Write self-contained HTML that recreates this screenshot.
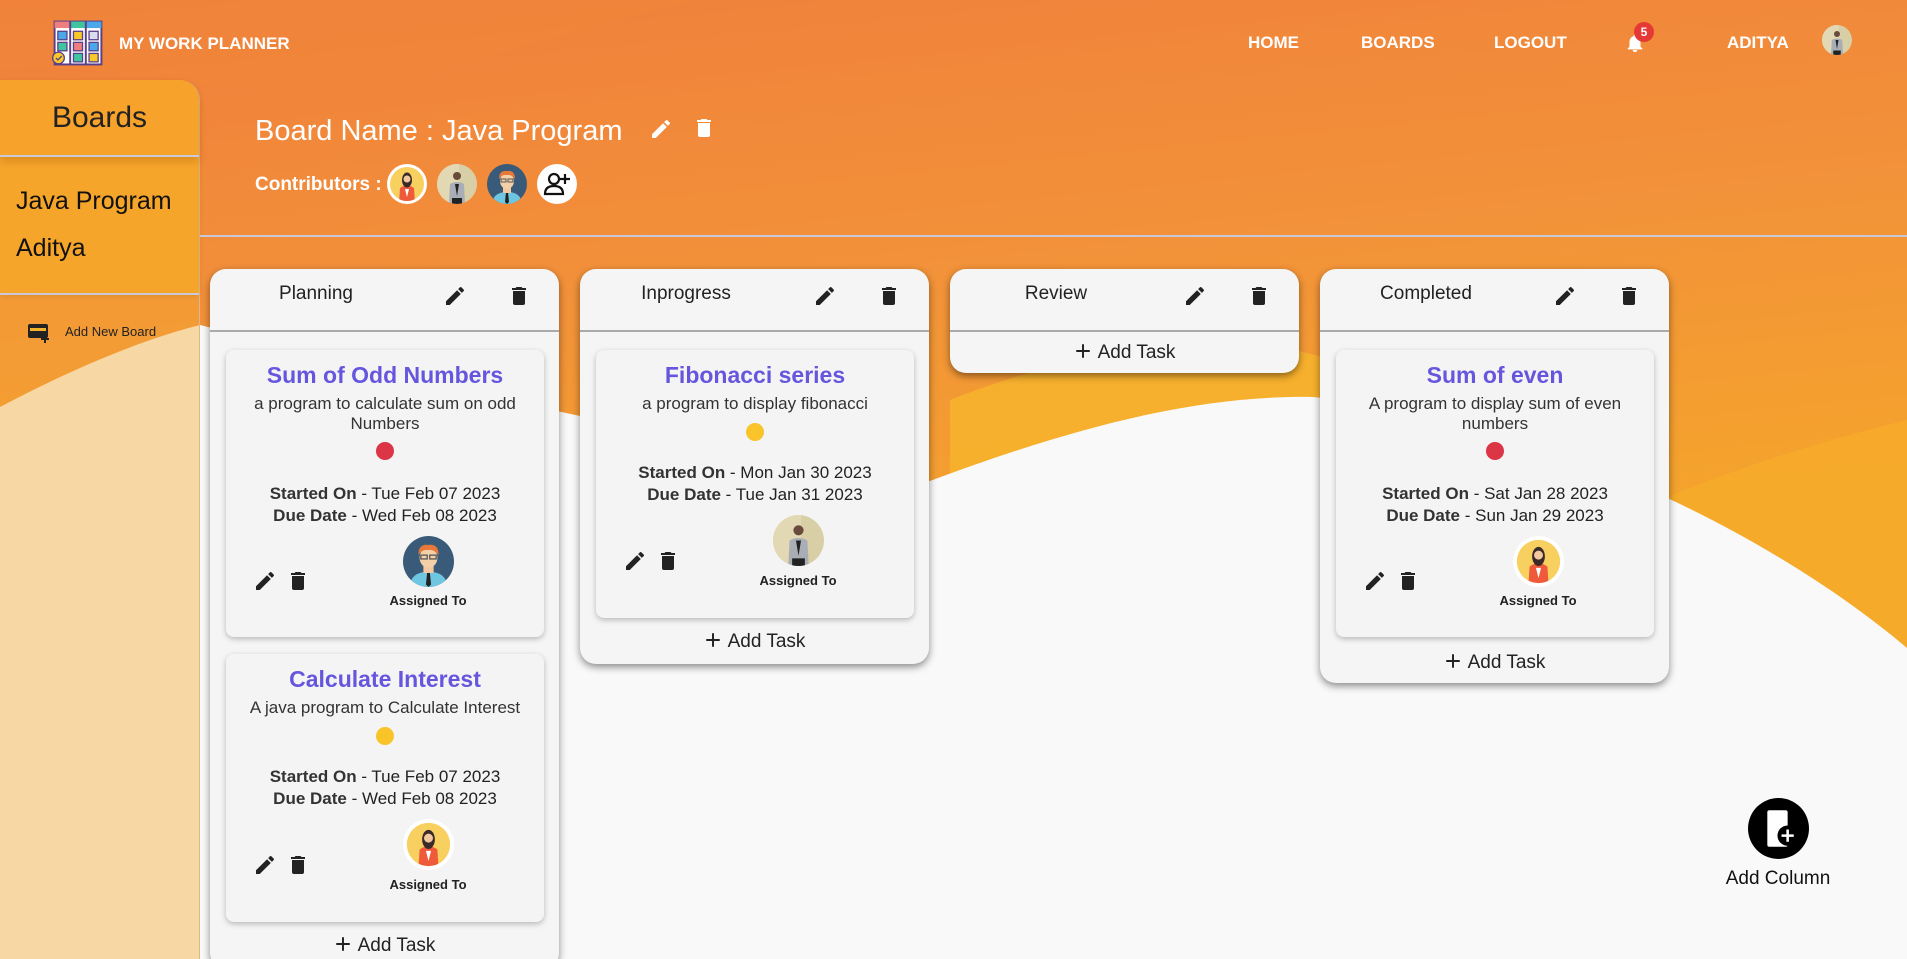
<!DOCTYPE html>
<html style="width:1907px;height:959px;overflow:hidden"><head><meta charset="utf-8">
<style>
*{box-sizing:border-box;margin:0;padding:0}
html,body{width:1907px;height:959px;overflow:hidden}
body{position:relative;font-family:"Liberation Sans",Arial,sans-serif;color:#222;background:#f9f9f9}
.abs{position:absolute}
.nav{color:#fff;font-weight:bold;font-size:17px;top:33px}
.col{position:absolute;top:269px;width:349px;background:#f5f5f5;border-radius:16px;box-shadow:0 3px 8px rgba(0,0,0,.45)}
.colhead{height:63px;border-bottom:2px solid #aaa;position:relative}
.coltitle{position:absolute;left:0;width:212px;top:14px;text-align:center;font-size:19px;color:#222}
.card{position:absolute;left:16px;width:318px;background:#f4f4f4;border-radius:8px;box-shadow:0 2px 6px rgba(0,0,0,.25)}
.t{position:absolute;left:0;right:0;text-align:center}
.ttl{font-weight:bold;font-size:23px;color:#6656de}
.desc{font-size:17px;color:#333;line-height:20px}
.dt{font-size:17px;color:#222}
.dt b{color:#333}
.dot{position:absolute;left:150px;width:18px;height:18px;border-radius:50%}
.asg{font-size:13px;font-weight:bold;left:142px;right:auto;width:120px}
.addtask{position:absolute;left:0;right:0;text-align:center;font-size:19px;color:#222}
.addtask svg{vertical-align:-2px;margin-right:6px}
.ic{position:absolute}
</style></head><body>
<svg class="abs" style="left:0;top:0" width="1907" height="959">
<defs>
<linearGradient id="g" x1="0" y1="0" x2="0.2" y2="1">
<stop offset="0" stop-color="#f07f3b"/><stop offset="0.35" stop-color="#f2913a"/><stop offset="0.7" stop-color="#f5a52b"/></linearGradient>
</defs>
<rect width="1907" height="959" fill="url(#g)"/>
<path d="M1050,959 C1300,700 1500,520 1907,420 L1907,959Z" fill="#f7ad2a" opacity=".7"/>
<path d="M950,400 C1100,340 1250,330 1330,360 L1330,420 C1200,450 1050,470 950,480Z" fill="#f8b52c" opacity=".8"/>
<path d="M0,407 C70,370 140,340 200,325 C380,370 560,420 930,481 C1080,425 1200,395 1313,397 C1550,420 1780,540 1907,648 L1907,959 L0,959Z" fill="#f9f9f9"/>
<path d="M0,0 L700,0 C520,40 400,90 330,95 C200,90 100,60 0,70Z" fill="#f28a3a" opacity=".35"/>
</svg>

<svg width="0" height="0" style="position:absolute">
<defs>
<symbol id="man" viewBox="0 0 40 40"><clipPath id="cm"><circle cx="20" cy="20" r="20"/></clipPath><g clip-path="url(#cm)"><rect width="40" height="40" fill="#d9cfa6"/><rect x="0" width="22" height="40" fill="#e2d8b4"/><path d="M12,40 L13,20 Q20,16 27,20 L28,40Z" fill="#a9aeb6"/><path d="M18,20 L20,32 L22,20Z" fill="#222"/><circle cx="20" cy="12" r="4" fill="#6a4a3a"/><rect x="15" y="34" width="10" height="6" fill="#222"/></g></symbol>
<symbol id="nerd" viewBox="0 0 40 40"><circle cx="20" cy="20" r="20" fill="#3a5a7a"/><clipPath id="cn"><circle cx="20" cy="20" r="20"/></clipPath><g clip-path="url(#cn)"><path d="M5,40 Q6,28 20,28 Q34,28 35,40Z" fill="#6fc6e0"/><path d="M19,28 L21,28 L22,38 L20,40 L18,38Z" fill="#222"/><rect x="16" y="23" width="8" height="6" fill="#f3c8a0"/><ellipse cx="20" cy="17" rx="7" ry="8" fill="#f3d0a8"/><path d="M12,15 Q12,6 20,7 Q28,6 28,15 Q24,10 20,11 Q15,10 12,15Z" fill="#e6783a"/><rect x="14" y="15" width="5" height="3" fill="none" stroke="#555" stroke-width="1"/><rect x="21" y="15" width="5" height="3" fill="none" stroke="#555" stroke-width="1"/></g></symbol>
<symbol id="woman" viewBox="0 0 40 40"><circle cx="20" cy="20" r="20" fill="#fff"/><circle cx="20" cy="20" r="17" fill="#f8d060"/><clipPath id="cw"><circle cx="20" cy="20" r="17"/></clipPath><g clip-path="url(#cw)"><path d="M12,40 L13,24 Q20,19 27,24 L28,40Z" fill="#ef5a3a"/><path d="M18,25 L20,33 L22,25Z" fill="#fff"/><ellipse cx="20" cy="16" rx="5" ry="7.5" fill="#3a2a2a"/><circle cx="20" cy="15" r="3.5" fill="#f3c8a0"/></g></symbol>
<symbol id="pen" viewBox="0 0 24 24"><path d="M3 17.25V21h3.75L17.81 9.94l-3.75-3.75L3 17.25zM20.71 7.04a1 1 0 0 0 0-1.41l-2.34-2.34a1 1 0 0 0-1.41 0l-1.83 1.83 3.75 3.75 1.83-1.83z" fill="#222"/></symbol>
<symbol id="bin" viewBox="0 0 24 24"><path d="M6 19a2 2 0 0 0 2 2h8a2 2 0 0 0 2-2V7H6v12zM19 4h-3.5l-1-1h-5l-1 1H5v2h14V4z" fill="#222"/></symbol>
<symbol id="plus" viewBox="0 0 24 24"><path d="M12 3v18M3 12h18" stroke="#222" stroke-width="2.6"/></symbol>
</defs></svg>

<!-- header -->
<svg class="abs" style="left:52px;top:18px" width="52" height="50" viewBox="0 0 80 70">
<rect x="4" y="2" width="72" height="66" fill="#fff" stroke="#5a3f8a" stroke-width="3"/>
<rect x="4" y="2" width="24" height="10" fill="#ef7e7e"/><rect x="28" y="2" width="24" height="10" fill="#3fc6a0"/><rect x="52" y="2" width="24" height="10" fill="#4ba6ea"/>
<line x1="28" y1="2" x2="28" y2="68" stroke="#5a3f8a" stroke-width="3"/><line x1="52" y1="2" x2="52" y2="68" stroke="#5a3f8a" stroke-width="3"/>
<rect x="9" y="17" width="14" height="13" fill="#4ba6ea" stroke="#5a3f8a" stroke-width="2"/><rect x="33" y="17" width="14" height="13" fill="#f8c928" stroke="#5a3f8a" stroke-width="2"/><rect x="57" y="17" width="14" height="13" fill="#dcdcf0" stroke="#5a3f8a" stroke-width="2"/>
<rect x="9" y="34" width="14" height="13" fill="#3fc6a0" stroke="#5a3f8a" stroke-width="2"/><rect x="33" y="34" width="14" height="13" fill="#ef7e7e" stroke="#5a3f8a" stroke-width="2"/><rect x="57" y="34" width="14" height="13" fill="#4ba6ea" stroke="#5a3f8a" stroke-width="2"/>
<rect x="33" y="51" width="14" height="13" fill="#3fc6a0" stroke="#5a3f8a" stroke-width="2"/><rect x="57" y="51" width="14" height="13" fill="#f8c928" stroke="#5a3f8a" stroke-width="2"/>
<circle cx="10" cy="58" r="9" fill="#f8c928" stroke="#5a3f8a" stroke-width="2"/><path d="M6,58 l3,3 l6,-6" fill="none" stroke="#5a3f8a" stroke-width="2"/>
</svg>
<div class="abs" style="left:119px;top:34px;color:#fff;font-weight:bold;font-size:17px">MY WORK PLANNER</div>
<div class="abs nav" style="left:1248px">HOME</div>
<div class="abs nav" style="left:1361px">BOARDS</div>
<div class="abs nav" style="left:1494px">LOGOUT</div>
<svg class="abs" style="left:1624px;top:31px" width="22" height="24" viewBox="0 0 24 24"><path d="M12 22a2.5 2.5 0 0 0 2.5-2.5h-5A2.5 2.5 0 0 0 12 22zM18 16v-5c0-3.1-1.6-5.6-4.5-6.3V4a1.5 1.5 0 0 0-3 0v.7C7.6 5.4 6 7.9 6 11v5l-2 2v1h16v-1z" fill="#fff"/></svg>
<div class="abs" style="left:1634px;top:22px;width:20px;height:20px;border-radius:50%;background:#e53935;color:#fff;font-size:12px;font-weight:bold;text-align:center;line-height:20px">5</div>
<div class="abs nav" style="left:1727px">ADITYA</div>
<svg class="abs" style="left:1822px;top:25px" width="30" height="30"><use href="#man"/></svg>

<!-- sidebar -->
<div class="abs" style="left:0;top:80px;width:200px;height:879px;border-top-right-radius:20px;background:rgba(246,170,45,.42);border-right:1px solid #d9b98a"></div>
<div class="abs" style="left:0;top:80px;width:199px;height:214px;border-top-right-radius:20px;background:#f6a52b;box-shadow:0 2px 6px rgba(0,0,0,.1)"></div>
<div class="abs" style="left:0;top:80px;width:199px;height:76px;border-top-right-radius:20px;background:#f6a22b;box-shadow:0 6px 8px rgba(150,80,0,.25)"></div>
<div class="abs" style="left:0;top:101px;width:199px;text-align:center;font-size:30px;color:#222">Boards</div>
<div class="abs" style="left:0;top:155px;width:199px;height:2px;background:#c9c9d8"></div>
<div class="abs" style="left:16px;top:187px;font-size:25px;color:#111">Java Program</div>
<div class="abs" style="left:16px;top:234px;font-size:25px;color:#111">Aditya</div>
<div class="abs" style="left:0;top:293px;width:199px;height:2px;background:#c9c9d8"></div>
<svg class="abs" style="left:27px;top:323px" width="24" height="20" viewBox="0 0 24 20"><rect x="1" y="1" width="20" height="14" rx="2" fill="#222"/><rect x="3" y="5" width="16" height="3" fill="#f6b030"/><path d="M18 12v8M14 16h8" stroke="#222" stroke-width="2"/></svg>
<div class="abs" style="left:65px;top:324px;font-size:13px;color:#222">Add New Board</div>

<!-- board header -->
<div class="abs" style="left:255px;top:115px;font-size:29px;color:#fff">Board Name : Java Program</div>
<svg class="abs" style="left:649px;top:117px" width="24" height="24" viewBox="0 0 24 24"><path d="M3 17.25V21h3.75L17.81 9.94l-3.75-3.75L3 17.25zM20.71 7.04a1 1 0 0 0 0-1.41l-2.34-2.34a1 1 0 0 0-1.41 0l-1.83 1.83 3.75 3.75 1.83-1.83z" fill="#fff"/></svg>
<svg class="abs" style="left:692px;top:115px" width="24" height="26" viewBox="0 0 24 24"><path d="M6 19a2 2 0 0 0 2 2h8a2 2 0 0 0 2-2V7H6v12zM19 4h-3.5l-1-1h-5l-1 1H5v2h14V4z" fill="#fff"/></svg>
<div class="abs" style="left:255px;top:174px;font-size:19px;font-weight:bold;color:#fff">Contributors :</div>
<svg class="abs" style="left:387px;top:164px" width="40" height="40"><use href="#woman"/></svg>
<svg class="abs" style="left:437px;top:164px" width="40" height="40"><use href="#man"/></svg>
<svg class="abs" style="left:487px;top:164px" width="40" height="40"><use href="#nerd"/></svg>
<svg class="abs" style="left:537px;top:164px" width="40" height="40" viewBox="0 0 40 40"><circle cx="20" cy="20" r="20" fill="#fff"/><circle cx="17" cy="15" r="5" fill="none" stroke="#111" stroke-width="2.2"/><path d="M8,30 Q8,22 17,22 Q26,22 26,30Z" fill="none" stroke="#111" stroke-width="2.2"/><path d="M28 10v10M23 15h10" stroke="#111" stroke-width="2.2"/></svg>
<div class="abs" style="left:200px;top:235px;width:1707px;height:2px;background:#c8c8d8"></div>

<!-- Planning -->
<div class="col" style="left:210px;height:700px">
<div class="colhead"><div class="coltitle">Planning</div>
<svg class="ic" style="left:233px;top:15px" width="24" height="24"><use href="#pen"/></svg>
<svg class="ic" style="left:297px;top:15px" width="24" height="24"><use href="#bin"/></svg></div>
<div class="card" style="top:81px;height:287px">
<div class="t ttl" style="top:12px">Sum of Odd Numbers</div>
<div class="t desc" style="top:44px;padding:0 20px">a program to calculate sum on odd Numbers</div>
<div class="dot" style="top:92px;background:#dc3545"></div>
<div class="t dt" style="top:134px"><b>Started On</b> - Tue Feb 07 2023</div>
<div class="t dt" style="top:156px"><b>Due Date</b> - Wed Feb 08 2023</div>
<svg class="ic" style="left:177px;top:186px" width="51" height="51"><use href="#nerd"/></svg>
<div class="t asg" style="top:243px">Assigned To</div>
<svg class="ic" style="left:27px;top:219px" width="24" height="24"><use href="#pen"/></svg>
<svg class="ic" style="left:60px;top:219px" width="24" height="24"><use href="#bin"/></svg>
</div>
<div class="card" style="top:385px;height:268px">
<div class="t ttl" style="top:12px">Calculate Interest</div>
<div class="t desc" style="top:44px">A java program to Calculate Interest</div>
<div class="dot" style="top:73px;background:#f8c42a"></div>
<div class="t dt" style="top:113px"><b>Started On</b> - Tue Feb 07 2023</div>
<div class="t dt" style="top:135px"><b>Due Date</b> - Wed Feb 08 2023</div>
<svg class="ic" style="left:177px;top:165px" width="51" height="51"><use href="#woman"/></svg>
<div class="t asg" style="top:223px">Assigned To</div>
<svg class="ic" style="left:27px;top:199px" width="24" height="24"><use href="#pen"/></svg>
<svg class="ic" style="left:60px;top:199px" width="24" height="24"><use href="#bin"/></svg>
</div>
<div class="addtask" style="top:666px"><svg width="18" height="18"><use href="#plus"/></svg>Add Task</div>
</div>

<!-- Inprogress -->
<div class="col" style="left:580px;height:395px">
<div class="colhead"><div class="coltitle">Inprogress</div>
<svg class="ic" style="left:233px;top:15px" width="24" height="24"><use href="#pen"/></svg>
<svg class="ic" style="left:297px;top:15px" width="24" height="24"><use href="#bin"/></svg></div>
<div class="card" style="top:81px;height:268px">
<div class="t ttl" style="top:12px">Fibonacci series</div>
<div class="t desc" style="top:44px">a program to display fibonacci</div>
<div class="dot" style="top:73px;background:#f8c42a"></div>
<div class="t dt" style="top:113px"><b>Started On</b> - Mon Jan 30 2023</div>
<div class="t dt" style="top:135px"><b>Due Date</b> - Tue Jan 31 2023</div>
<svg class="ic" style="left:177px;top:165px" width="51" height="51"><use href="#man"/></svg>
<div class="t asg" style="top:223px">Assigned To</div>
<svg class="ic" style="left:27px;top:199px" width="24" height="24"><use href="#pen"/></svg>
<svg class="ic" style="left:60px;top:199px" width="24" height="24"><use href="#bin"/></svg>
</div>
<div class="addtask" style="top:362px"><svg width="18" height="18"><use href="#plus"/></svg>Add Task</div>
</div>

<!-- Review -->
<div class="col" style="left:950px;height:104px">
<div class="colhead"><div class="coltitle">Review</div>
<svg class="ic" style="left:233px;top:15px" width="24" height="24"><use href="#pen"/></svg>
<svg class="ic" style="left:297px;top:15px" width="24" height="24"><use href="#bin"/></svg></div>
<div class="addtask" style="top:73px"><svg width="18" height="18"><use href="#plus"/></svg>Add Task</div>
</div>

<!-- Completed -->
<div class="col" style="left:1320px;height:414px">
<div class="colhead"><div class="coltitle">Completed</div>
<svg class="ic" style="left:233px;top:15px" width="24" height="24"><use href="#pen"/></svg>
<svg class="ic" style="left:297px;top:15px" width="24" height="24"><use href="#bin"/></svg></div>
<div class="card" style="top:81px;height:287px">
<div class="t ttl" style="top:12px">Sum of even</div>
<div class="t desc" style="top:44px;padding:0 20px">A program to display sum of even numbers</div>
<div class="dot" style="top:92px;background:#dc3545"></div>
<div class="t dt" style="top:134px"><b>Started On</b> - Sat Jan 28 2023</div>
<div class="t dt" style="top:156px"><b>Due Date</b> - Sun Jan 29 2023</div>
<svg class="ic" style="left:177px;top:186px" width="51" height="51"><use href="#woman"/></svg>
<div class="t asg" style="top:243px">Assigned To</div>
<svg class="ic" style="left:27px;top:219px" width="24" height="24"><use href="#pen"/></svg>
<svg class="ic" style="left:60px;top:219px" width="24" height="24"><use href="#bin"/></svg>
</div>
<div class="addtask" style="top:383px"><svg width="18" height="18"><use href="#plus"/></svg>Add Task</div>
</div>

<!-- Add column -->
<svg class="abs" style="left:1748px;top:798px" width="61" height="61" viewBox="0 0 60 60"><circle cx="30" cy="30" r="30" fill="#000"/><rect x="19" y="12" width="20" height="36" rx="2" fill="#fff"/><circle cx="39" cy="37" r="10" fill="#000"/><path d="M39 31v12M33 37h12" stroke="#fff" stroke-width="2.5"/></svg>
<div class="abs" style="left:1700px;top:868px;width:156px;text-align:center;font-size:19px;color:#111">Add Column</div>
</body></html>
